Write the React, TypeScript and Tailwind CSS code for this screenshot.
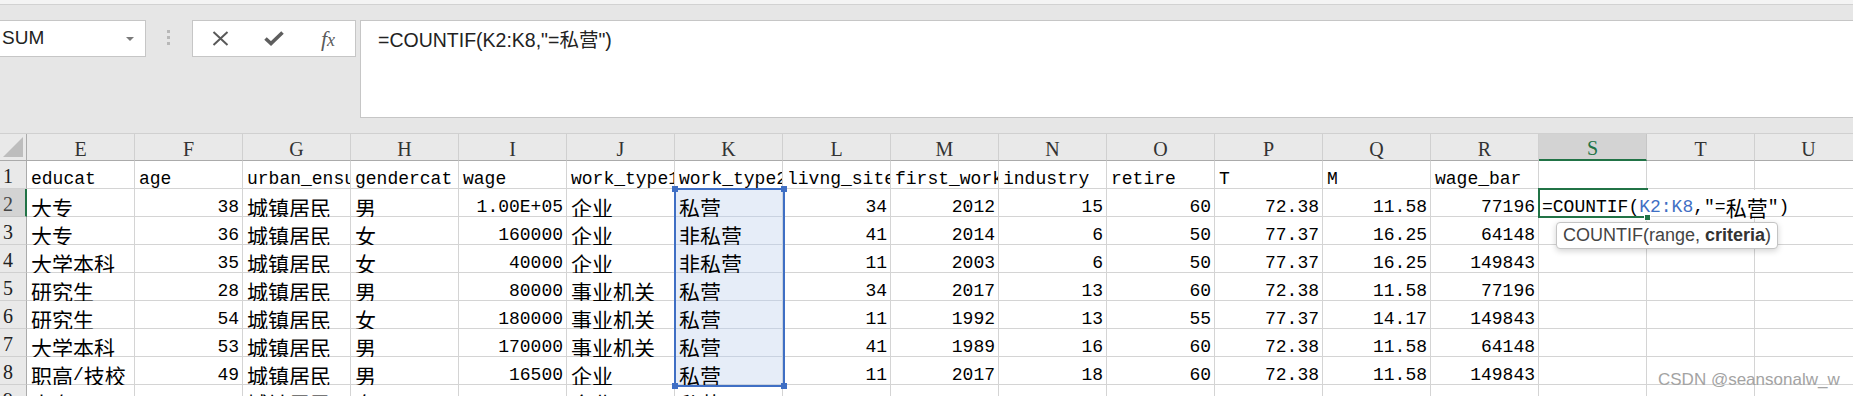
import React from "react";

const COLS = ["E", "F", "G", "H", "I", "J", "K", "L", "M", "N", "O", "P", "Q", "R", "S", "T", "U"];

// E..R, the rest of the row is empty
const ROWS: string[][] = [
  ["educat", "age", "urban_ensu", "gendercat", "wage", "work_type1", "work_type2", "livng_site", "first_work", "industry", "retire", "T", "M", "wage_bar"],
  ["大专", "38", "城镇居民", "男", "1.00E+05", "企业", "私营", "34", "2012", "15", "60", "72.38", "11.58", "77196"],
  ["大专", "36", "城镇居民", "女", "160000", "企业", "非私营", "41", "2014", "6", "50", "77.37", "16.25", "64148"],
  ["大学本科", "35", "城镇居民", "女", "40000", "企业", "非私营", "11", "2003", "6", "50", "77.37", "16.25", "149843"],
  ["研究生", "28", "城镇居民", "男", "80000", "事业机关", "私营", "34", "2017", "13", "60", "72.38", "11.58", "77196"],
  ["研究生", "54", "城镇居民", "女", "180000", "事业机关", "私营", "11", "1992", "13", "55", "77.37", "14.17", "149843"],
  ["大学本科", "53", "城镇居民", "男", "170000", "事业机关", "私营", "41", "1989", "16", "60", "72.38", "11.58", "64148"],
  ["职高/技校", "49", "城镇居民", "男", "16500", "企业", "私营", "11", "2017", "18", "60", "72.38", "11.58", "149843"],
  ["大专", "43", "城镇居民", "女", "202500", "企业", "私营", "11", "2005", "13", "50", "77.37", "16.25", "149843"],
];

const CJK = /([\u3400-\u9fff]+)/;

// cjk runs get a bigger size so they sit wider than the half-width latin chars
const Txt = ({ s }: { s: string }) => (
  <>
    {s.split(CJK).map((p, i) =>
      p === "" ? null : CJK.test(p) ? (
        <span key={i} className="font-['Noto_Sans_CJK_SC',sans-serif] text-[21px] leading-[18px]">
          {p}
        </span>
      ) : (
        <span key={i}>{p}</span>
      )
    )}
  </>
);

const Corner = () => (
  <svg width="20" height="20" viewBox="0 0 20 20" className="absolute right-[3px] bottom-[3px]">
    <polygon points="20,0 20,20 0,20" fill="#bdbdbd" />
  </svg>
);

const Toolbar = () => (
  <div className="h-[133px] bg-[#e6e6e6]">
    <div className="h-[5px] bg-[#f4f4f4] border-b border-[#d2d2d2]" />
    <div className="flex items-start pt-[15px]">
      {/* Name box */}
      <div className="w-[146px] h-[37px] bg-white border border-l-0 border-[#c6c6c6] flex items-center justify-between pl-[2px] pr-[11px]">
        <span className="font-['Liberation_Sans',sans-serif] text-[19px] text-[#222]">SUM</span>
        <span className="w-0 h-0 border-l-[4px] border-r-[4px] border-t-[4px] border-l-transparent border-r-transparent border-t-[#7a7a7a]" />
      </div>

      {/* grip dots */}
      <div className="ml-[21px] mt-[10px] flex flex-col gap-[3px]">
        <div className="w-[3px] h-[3px] bg-[#b8b8b8]" />
        <div className="w-[3px] h-[3px] bg-[#b8b8b8]" />
        <div className="w-[3px] h-[3px] bg-[#b8b8b8]" />
      </div>

      {/* cancel / enter / fx */}
      <div className="ml-[22px] w-[164px] h-[37px] bg-white border border-[#c6c6c6] grid grid-cols-3 items-center justify-items-center">
        <svg width="17" height="15" viewBox="0 0 17 15">
          <path d="M1.5 1 L15.5 14 M15.5 1 L1.5 14" stroke="#595959" strokeWidth="2" />
        </svg>
        <svg width="20" height="15" viewBox="0 0 20 15">
          <path d="M1.5 7.5 L7 12.5 L18.5 1.5" stroke="#5e5e5e" strokeWidth="3.6" fill="none" />
        </svg>
        <span className="font-['Liberation_Serif',serif] italic text-[22px] leading-none text-[#5b5b5b]">
          f<span className="text-[18px]">x</span>
        </span>
      </div>

      {/* Formula bar */}
      <div className="ml-[4px] flex-1 h-[98px] bg-white border border-r-0 border-[#c6c6c6] pl-[17px] pt-[7px]">
        <div className="font-['Liberation_Sans','Noto_Sans_CJK_SC',sans-serif] text-[19.5px] leading-[24px] text-[#222]">
          =COUNTIF(K2:K8,"=私营")
        </div>
      </div>
    </div>
  </div>
);

const Grid = () => (
  <div className="relative border-t border-[#d0d0d0]">
    <div className="grid grid-cols-[27px_repeat(17,108px)] grid-rows-[27px_repeat(9,28px)]">
      {/* column headers */}
      <div className="relative bg-[#e9e9e9] border-r border-b border-r-[#ababab] border-b-[#ababab]">
        <Corner />
      </div>
      {COLS.map((c) =>
        c === "S" ? (
          <div
            key={c}
            className="flex items-center justify-center pt-[3px] bg-[#d3d3d3] border-r border-r-[#c6c6c6] border-b-2 border-b-[#217346] font-['Liberation_Serif',serif] text-[20px] text-[#217346]"
          >
            {c}
          </div>
        ) : (
          <div
            key={c}
            className="flex items-center justify-center pt-[3px] bg-[#e9e9e9] border-r border-b border-r-[#d0d0d0] border-b-[#ababab] font-['Liberation_Serif',serif] text-[20px] text-[#333]"
          >
            {c}
          </div>
        )
      )}

      {/* rows */}
      {ROWS.map((row, ri) => (
        <React.Fragment key={ri}>
          {ri === 1 ? (
            <div className="flex items-center pl-[3px] pt-[3px] bg-[#d3d3d3] border-b border-b-[#c6c6c6] border-r-2 border-r-[#217346] font-['Liberation_Serif',serif] text-[20px] text-[#444]">
              {ri + 1}
            </div>
          ) : (
            <div className="flex items-center pl-[3px] pt-[3px] bg-[#e9e9e9] border-r border-b border-r-[#ababab] border-b-[#d0d0d0] font-['Liberation_Serif',serif] text-[20px] text-[#222]">
              {ri + 1}
            </div>
          )}
          {COLS.map((c, ci) => {
            const v = row[ci] ?? "";
            const num = /^\d/.test(v);
            const sel = c === "K" && ri >= 1 && ri <= 7;
            return (
              <div
                key={c}
                className={
                  "flex items-end whitespace-nowrap border-r border-b font-['Liberation_Mono','Noto_Sans_CJK_SC',monospace] text-[18px] leading-[18px] text-black " +
                  (ri === 0 ? "overflow-hidden " : "") +
                  (num ? "justify-end pr-[3px] " : "justify-start pl-[4px] ") +
                  (sel ? "bg-[#e6edf8] border-[#c9d2e0]" : "bg-white border-[#d4d4d4]")
                }
              >
                <Txt s={v} />
              </div>
            );
          })}
        </React.Fragment>
      ))}
    </div>

    {/* K2:K8 reference highlight */}
    <div className="absolute left-[674px] top-[54px] w-[111px] h-[199px] border-2 border-[#3f6fc4]">
      <div className="absolute -left-[4px] -top-[4px] w-[6px] h-[6px] bg-[#3f6fc4]" />
      <div className="absolute -right-[4px] -top-[4px] w-[6px] h-[6px] bg-[#3f6fc4]" />
      <div className="absolute -left-[4px] -bottom-[4px] w-[6px] h-[6px] bg-[#3f6fc4]" />
      <div className="absolute -right-[4px] -bottom-[4px] w-[6px] h-[6px] bg-[#3f6fc4]" />
    </div>

    {/* active cell S2, in edit mode */}
    <div className="absolute left-[1538px] top-[54px] w-[110px] h-[30px] border-2 border-[#217346]" />
    <div className="absolute left-[1540px] top-[56px] h-[26px] w-[256px] bg-white flex items-end pl-[2px] font-['Liberation_Mono','Noto_Sans_CJK_SC',monospace] text-[18px] leading-[18px] text-black whitespace-nowrap">
      <span>=COUNTIF(</span>
      <span className="text-[#3f6fc4]">K2:K8</span>
      <Txt s={',"=私营")'} />
    </div>
    <div className="absolute left-[1644px] top-[80px] w-[7px] h-[7px] bg-[#217346] border border-white" />

    {/* function tooltip */}
    <div className="absolute left-[1556px] top-[88px] h-[27px] px-[6px] flex items-center bg-white border border-[#c4c4c4] rounded-[4px] shadow-[0_2px_6px_rgba(0,0,0,0.18)] font-['Liberation_Sans',sans-serif] text-[18px] text-[#444] whitespace-nowrap">
      COUNTIF(range, <span className="font-bold text-[#333] ml-[5px]">criteria</span>)
    </div>
  </div>
);

export default function App() {
  return (
    <div className="relative w-[1853px] h-[396px] overflow-hidden bg-white">
      <Toolbar />
      <Grid />
      <div className="absolute left-[1658px] top-[367px] font-['Liberation_Sans',sans-serif] text-[17px] text-[#a3a3a3]">
        CSDN @seansonalw_w
      </div>
    </div>
  );
}
